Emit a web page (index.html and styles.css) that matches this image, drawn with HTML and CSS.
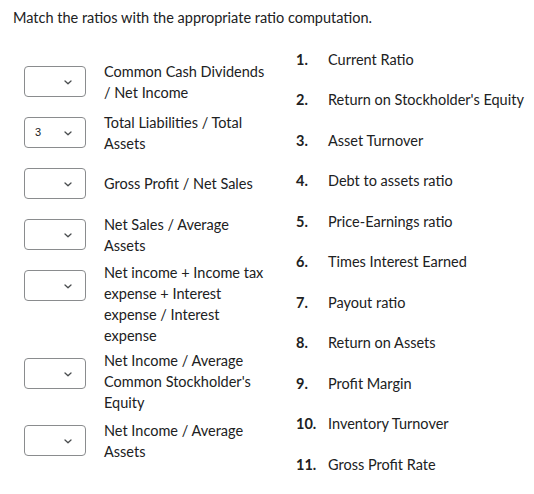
FILE: index.html
```html
<!DOCTYPE html>
<html lang="en">
<head>
<meta charset="utf-8">
<title>Match ratios</title>
<link rel="stylesheet" href="styles.css">
</head>
<body>
<p class="prompt">Match the ratios with the appropriate ratio computation.</p>
<div class="match">
  <div class="pairs">
    <div class="pair">
      <div class="select"><span class="value"></span><svg class="chev" width="8" height="5" viewBox="0 0 8 5"><path d="M1 1 L4 3.8 L7 1" fill="none" stroke="#494c4e" stroke-width="1.3" stroke-linecap="round" stroke-linejoin="round"/></svg></div>
      <div class="label">Common Cash Dividends / Net Income</div>
    </div>
    <div class="pair">
      <div class="select"><span class="value">3</span><svg class="chev" width="8" height="5" viewBox="0 0 8 5"><path d="M1 1 L4 3.8 L7 1" fill="none" stroke="#494c4e" stroke-width="1.3" stroke-linecap="round" stroke-linejoin="round"/></svg></div>
      <div class="label">Total Liabilities / Total Assets</div>
    </div>
    <div class="pair">
      <div class="select"><span class="value"></span><svg class="chev" width="8" height="5" viewBox="0 0 8 5"><path d="M1 1 L4 3.8 L7 1" fill="none" stroke="#494c4e" stroke-width="1.3" stroke-linecap="round" stroke-linejoin="round"/></svg></div>
      <div class="label">Gross Profit / Net Sales</div>
    </div>
    <div class="pair">
      <div class="select"><span class="value"></span><svg class="chev" width="8" height="5" viewBox="0 0 8 5"><path d="M1 1 L4 3.8 L7 1" fill="none" stroke="#494c4e" stroke-width="1.3" stroke-linecap="round" stroke-linejoin="round"/></svg></div>
      <div class="label">Net Sales / Average Assets</div>
    </div>
    <div class="pair">
      <div class="select"><span class="value"></span><svg class="chev" width="8" height="5" viewBox="0 0 8 5"><path d="M1 1 L4 3.8 L7 1" fill="none" stroke="#494c4e" stroke-width="1.3" stroke-linecap="round" stroke-linejoin="round"/></svg></div>
      <div class="label">Net income + Income tax expense + Interest expense / Interest expense</div>
    </div>
    <div class="pair">
      <div class="select"><span class="value"></span><svg class="chev" width="8" height="5" viewBox="0 0 8 5"><path d="M1 1 L4 3.8 L7 1" fill="none" stroke="#494c4e" stroke-width="1.3" stroke-linecap="round" stroke-linejoin="round"/></svg></div>
      <div class="label">Net Income / Average Common Stockholder's Equity</div>
    </div>
    <div class="pair">
      <div class="select"><span class="value"></span><svg class="chev" width="8" height="5" viewBox="0 0 8 5"><path d="M1 1 L4 3.8 L7 1" fill="none" stroke="#494c4e" stroke-width="1.3" stroke-linecap="round" stroke-linejoin="round"/></svg></div>
      <div class="label">Net Income / Average Assets</div>
    </div>
  </div>
  <ol class="choices">
    <li><span class="num">1.</span><span>Current Ratio</span></li>
    <li><span class="num">2.</span><span>Return on Stockholder's Equity</span></li>
    <li><span class="num">3.</span><span>Asset Turnover</span></li>
    <li><span class="num">4.</span><span>Debt to assets ratio</span></li>
    <li><span class="num">5.</span><span>Price-Earnings ratio</span></li>
    <li><span class="num">6.</span><span>Times Interest Earned</span></li>
    <li><span class="num">7.</span><span>Payout ratio</span></li>
    <li><span class="num">8.</span><span>Return on Assets</span></li>
    <li><span class="num">9.</span><span>Profit Margin</span></li>
    <li><span class="num">10.</span><span>Inventory Turnover</span></li>
    <li><span class="num">11.</span><span>Gross Profit Rate</span></li>
  </ol>
</div>
</body>
</html>
```
FILE: styles.css
```css
body {
  margin: 0;
  background: #ffffff;
  font-family: Lato, "Open Sans", sans-serif;
  font-size: 14.5px;
  line-height: 21px;
  color: #202122;
}
.prompt {
  margin: 0;
  padding: 6.5px 0 0 13px;
}
.match {
  display: flex;
  padding: 0 0 0 24px;
}
.pairs {
  display: flex;
  flex-direction: column;
  width: 246px;
  padding-top: 28.5px;
}
.pair {
  display: flex;
  align-items: flex-start;
}
.select {
  box-sizing: border-box;
  width: 62px;
  height: 31px;
  margin: 10px 0;
  border: 1px solid #8a8c8e;
  border-radius: 4px;
  display: flex;
  align-items: center;
  justify-content: space-between;
  padding: 0 13px 0 10px;
  flex-shrink: 0;
}
.value {
  font-family: "Liberation Sans", Arial, sans-serif;
  font-size: 11px;
  color: #202122;
}
.chev {
  display: block;
  margin-top: 1px;
}
.label {
  margin-left: 18px;
  width: 164px;
  align-self: stretch;
  padding: 2px 0;
  display: flex;
  align-items: center;
}
.choices {
  list-style: none;
  margin: 0 0 0 26px;
  padding: 21.3px 0 0 0;
}
.choices li {
  display: flex;
  height: 40.5px;
}
.num {
  width: 32px;
  font-weight: 700;
  flex-shrink: 0;
}
```
